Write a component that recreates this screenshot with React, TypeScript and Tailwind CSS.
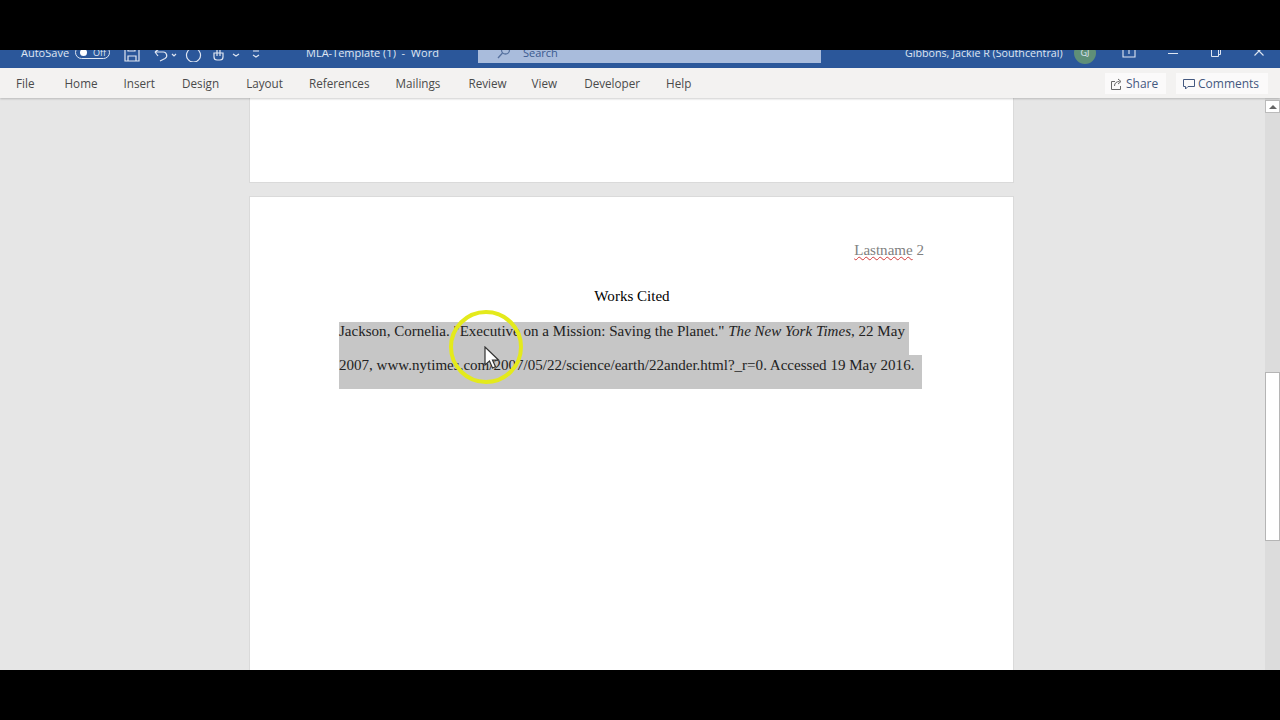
const tabs = [
  { label: "File", cls: "ml-[16px]" },
  { label: "Home", cls: "ml-[30px]" },
  { label: "Insert", cls: "ml-[26px]" },
  { label: "Design", cls: "ml-[27px]" },
  { label: "Layout", cls: "ml-[27px]" },
  { label: "References", cls: "ml-[26px]" },
  { label: "Mailings", cls: "ml-[26px]" },
  { label: "Review", cls: "ml-[28px]" },
  { label: "View", cls: "ml-[25px]" },
  { label: "Developer", cls: "ml-[27px]" },
  { label: "Help", cls: "ml-[26px]" },
];

function TitleBar() {
  return (
    <div className="flex h-[28px] -mt-[10px] shrink-0 items-start bg-[#2b579a] pt-[5px] text-[11px] leading-[16px] text-[#dfe6f2] font-['Open_Sans',sans-serif]">
      <span className="ml-[21px] w-[54px]">AutoSave</span>
      <div className="flex h-[13px] w-[35px] items-center rounded-full border border-[#dfe6f2] pl-[4px] mt-[1px]">
        <span className="h-[7px] w-[7px] rounded-full bg-white" />
        <span className="ml-[6px] text-[9px]">Off</span>
      </div>
      <svg className="ml-[14px]" width="140" height="17" viewBox="0 0 140 17" fill="none" stroke="#dfe6f2" strokeWidth="1.2">
        <path d="M1 2h12l2 2v12H1z M4 16v-5h8v5 M4 2v4h7V2" />
        <path d="M31 7h8a3.500 3.500 0 0 1 2 6.500L36 16 M31 7l4-3 M31 7l3 4" />
        <path d="M48 9l2 2 2-2" />
        <path d="M67 3.500a7 7 0 1 0 5 0 M71 0.500v4h-4" />
        <path d="M93 3v8 M96 3v8 M90 8h9v4a3 3 0 0 1-3 3h-3a3 3 0 0 1-3-3z" />
        <path d="M109 9l3 2 3-2" />
        <path d="M129 6h6 M129 10l3 2 3-2" />
      </svg>
      <span className="ml-[42px] w-[132px] whitespace-pre">MLA-Template (1)  -  Word</span>
      <div className="ml-[40px] flex h-[18px] w-[343px] items-start bg-[#a9bcdc] pl-[19px] text-[#3a5a90]">
        <svg width="14" height="14" viewBox="0 0 14 14" fill="none" stroke="#56719f" strokeWidth="1.3">
          <circle cx="8.500" cy="5" r="4" />
          <path d="M5.500 8L1 13" />
        </svg>
        <span className="ml-[12px]">Search</span>
      </div>
      <span className="ml-[84px] w-[158px] whitespace-nowrap text-[10.7px]">Gibbons, Jackie R (Southcentral)</span>
      <div className="ml-[11px] -mt-[3px] flex h-[22px] w-[22px] items-center justify-center rounded-full bg-[#5f8f78] text-[9px]">GJ</div>
      <svg className="ml-[26px]" width="14" height="14" viewBox="0 0 14 14" fill="none" stroke="#dfe6f2" strokeWidth="1.1">
        <path d="M1 4h3 M10 4h3v8H1V4 M7 9V2 M4.500 4.500L7 2l2.500 2.500" />
      </svg>
      <div className="ml-[32px] mt-[8px] h-px w-[10px] bg-[#dfe6f2]" />
      <svg className="ml-[33px]" width="10" height="14" viewBox="0 0 10 14" fill="none" stroke="#dfe6f2" strokeWidth="1">
        <path d="M0.500 3.500h7v8h-7z M3 3V1.500h6.500v8H8" />
      </svg>
      <svg className="ml-[33px]" width="10" height="14" viewBox="0 0 10 14" fill="none" stroke="#dfe6f2" strokeWidth="1.1">
        <path d="M0.500 1.500l9 9 M9.500 1.500l-9 9" />
      </svg>
    </div>
  );
}

function RibbonTabs() {
  return (
    <div className="relative z-[1] flex h-[30px] shrink-0 items-center bg-[#f3f2f1] pt-[1px] text-[11.7px] text-[#4a4a4a] shadow-[0_1px_2px_rgba(0,0,0,0.2)] font-['Open_Sans',sans-serif]">
      {tabs.map((t) => (
        <span key={t.label} className={t.cls}>
          {t.label}
        </span>
      ))}
      <div className="ml-auto mr-[12px] flex gap-[10px] text-[12px] text-[#44587f]">
        <div className="flex h-[21px] w-[61px] items-center gap-[5px] bg-[#fbfafa] pl-[6px]">
          <svg width="11" height="12" viewBox="0 0 11 12" fill="none" stroke="#666" strokeWidth="1">
            <path d="M4 3.500H0.500v8h9V8 M3.500 8c0-3 2-4.500 5-4.500 M7 1l3 2.500L7 6" />
          </svg>
          <span className="-ml-[1px]">Share</span>
        </div>
        <div className="flex h-[21px] w-[92px] items-center gap-[3px] bg-[#fbfafa] pl-[7px]">
          <svg width="12" height="12" viewBox="0 0 12 12" fill="none" stroke="#44587f" strokeWidth="1">
            <path d="M0.500 1.500h11v7H5l-2.500 2.500V8.500h-2z" />
          </svg>
          <span>Comments</span>
        </div>
      </div>
    </div>
  );
}

function Scrollbar() {
  return (
    <div className="flex w-[15px] shrink-0 flex-col bg-[#dcdcdc] pt-[2px]">
      <div className="flex h-[13px] items-center justify-center border border-[#bbb] bg-white">
        <div className="h-0 w-0 border-x-[4px] border-b-[4px] border-x-transparent border-b-[#666]" />
      </div>
      <div className="mt-[259px] h-[169px] border border-[#b5b5b5] bg-white" />
    </div>
  );
}

function Page() {
  return (
    <div className="relative h-[500px] w-[765px] border border-[#dadada] bg-white pl-[89px] font-['Liberation_Serif',serif] text-[15.05px] leading-[20px] text-[#222]">
      <div className="pt-[43px] pr-[89px] text-right text-[#808080]">
        <span className="underline decoration-wavy decoration-[#d23a3a] decoration-1">Lastname</span> 2
      </div>
      <div className="mt-[26px] pr-[88px] text-center text-black">Works Cited</div>
      <div className="mt-[16px] h-[33px] w-[570px] whitespace-nowrap bg-[#c6c6c6] leading-[18px]">
        Jackson, Cornelia. "Executive on a Mission: Saving the Planet." <i>The New York Times</i>, 22 May
      </div>
      <div className="h-[34px] w-[583px] whitespace-nowrap bg-[#c6c6c6]">
        2007, www.nytimes.com/2007/05/22/science/earth/22ander.html?_r=0. Accessed 19 May 2016.
      </div>
      {/* presenter's cursor highlight */}
      <div className="absolute left-[199px] top-[113px] h-[74px] w-[74px] rounded-full border-[4px] border-[#e4ea1c]" />
      <svg className="absolute left-[234px] top-[149px]" width="16" height="24" viewBox="0 0 16 24">
        <path d="M1 1v18l4.500-4 3 7 3-1.300-3-6.700h6z" fill="#fff" stroke="#333" strokeWidth="1.2" />
      </svg>
    </div>
  );
}

export default function App() {
  return (
    <div className="flex h-[720px] w-[1280px] flex-col overflow-hidden bg-black">
      <div className="relative z-10 h-[50px] shrink-0 bg-black" />
      <TitleBar />
      <RibbonTabs />
      <div className="flex h-[572px] shrink-0 overflow-hidden bg-[#e6e6e6]">
        <div className="flex flex-1 flex-col items-center pr-[2px]">
          <div className="h-[85px] w-[765px] shrink-0 border border-t-0 border-[#dadada] bg-white" />
          <div className="mt-[13px]">
            <Page />
          </div>
        </div>
        <Scrollbar />
      </div>
      <div className="relative z-10 flex-1 bg-black" />
    </div>
  );
}
